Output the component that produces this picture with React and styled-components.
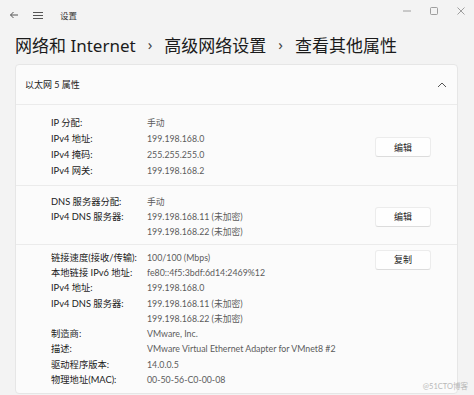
import React from "react";
import styled, { createGlobalStyle } from "styled-components";

const Global = createGlobalStyle`
  html, body { margin: 0; padding: 0; background: #f3f3f3; }
  body {
    font-family: Lato, "Noto Sans CJK SC", sans-serif;
    color: #1b1b1b;
  }
`;

const Page = styled.div`
  width: 474px;
  height: 395px;
  overflow: hidden;
  position: relative;
  background: #f3f3f3;
`;

const TopBar = styled.div`
  height: 30px;
  display: flex;
  align-items: center;
  padding: 0 0 0 8px;
`;

const IconBtn = styled.div`
  width: ${(p) => p.w || 26}px;
  display: flex;
  align-items: center;
  justify-content: center;
  color: #555;
`;

const AppName = styled.span`
  font-size: 8.5px;
  color: #333;
  margin-left: 4px;
`;

const WinControls = styled.div`
  margin-left: auto;
  display: flex;
  align-items: center;
  align-self: flex-start;
  height: 22px;
`;

const WinBtn = styled.div`
  width: 27px;
  display: flex;
  justify-content: center;
  color: #777;
`;

const Title = styled.h1`
  margin: 0;
  padding: 0 0 6px 15px;
  box-sizing: border-box;
  font-family: "Noto Sans", "Noto Sans CJK SC", sans-serif;
  font-size: 17px;
  font-weight: 400;
  height: 34px;
  display: flex;
  align-items: center;
  gap: 10px;
  color: #1b1b1b;
`;

const Sep = styled.span`
  font-size: 15px;
  color: #444;
  margin: 0 2px;
`;

const Card = styled.div`
  margin: 0 16px 0 15px;
  background: #fbfbfb;
  border: 1px solid #e6e6e6;
  border-radius: 4px;
`;

const CardHeader = styled.div`
  height: 40px;
  box-sizing: border-box;
  display: flex;
  align-items: center;
  padding: 0 10px 0 9px;
  font-size: 9px;
  color: #1b1b1b;
  border-bottom: 1px solid #ebebeb;
`;

const Chevron = styled.div`
  margin-left: auto;
  display: flex;
  color: #555;
`;

const Section = styled.div`
  display: flex;
  align-items: ${(p) => (p.top ? "flex-start" : "center")};
  padding: ${(p) => p.pad};
  border-bottom: ${(p) => (p.last ? "none" : "1px solid #ebebeb")};
`;

const Rows = styled.div`
  flex: 1;
  display: grid;
  grid-template-columns: 96px 1fr;
  align-items: baseline;
  padding-left: 35px;
  font-size: 9.3px;
  line-height: ${(p) => p.lh}px;
`;

const Label = styled.div`
  color: #1b1b1b;
  white-space: nowrap;
`;

const Value = styled.div`
  color: #5c5c5c;
  font-size: 8.8px;
  white-space: nowrap;
`;

const Button = styled.div`
  width: 54px;
  height: 18px;
  margin-right: 26px;
  background: #fefefe;
  border: 1px solid #ececec;
  border-bottom-color: #dcdcdc;
  border-radius: 3px;
  display: flex;
  align-items: center;
  justify-content: center;
  font-size: 9px;
  color: #1b1b1b;
`;

const Watermark = styled.div`
  position: absolute;
  right: 6px;
  bottom: 4px;
  font-size: 7.5px;
  color: #b8b8b8;
`;

const rowsFor = (items) =>
  items.map(([l, v], i) => (
    <React.Fragment key={i}>
      <Label>{l}</Label>
      <Value>{v}</Value>
    </React.Fragment>
  ));

export default function App() {
  return (
    <Page>
      <Global />
      <TopBar>
        <IconBtn w={12}>
          <svg width="10" height="10" viewBox="0 0 10 10" fill="none" stroke="#555" strokeWidth="1">
            <path d="M9 5H1.5M4.5 2 1.5 5l3 3" />
          </svg>
        </IconBtn>
        <IconBtn w={36}>
          <svg width="10" height="9" viewBox="0 0 10 9" fill="none" stroke="#555" strokeWidth="1">
            <path d="M0 1.5h10M0 4.5h10M0 7.5h10" />
          </svg>
        </IconBtn>
        <AppName>设置</AppName>
        <WinControls>
          <WinBtn>
            <svg width="8" height="8" viewBox="0 0 8 8" stroke="#888" strokeWidth="0.8">
              <path d="M0 4h8" />
            </svg>
          </WinBtn>
          <WinBtn>
            <svg width="8" height="8" viewBox="0 0 8 8" fill="none" stroke="#888" strokeWidth="0.8">
              <rect x="0.5" y="0.5" width="7" height="7" rx="1" />
            </svg>
          </WinBtn>
          <WinBtn>
            <svg width="8" height="8" viewBox="0 0 8 8" stroke="#888" strokeWidth="0.8">
              <path d="M0.5 0.5l7 7M7.5 0.5l-7 7" />
            </svg>
          </WinBtn>
        </WinControls>
      </TopBar>
      <Title>
        网络和 Internet <Sep>›</Sep> 高级网络设置 <Sep>›</Sep> 查看其他属性
      </Title>
      <Card>
        <CardHeader>
          以太网 5 属性
          <Chevron>
            <svg width="10" height="6" viewBox="0 0 10 6" fill="none" stroke="#555" strokeWidth="1">
              <path d="M1 5l4-4 4 4" />
            </svg>
          </Chevron>
        </CardHeader>
        <Section pad="10px 0 6px">
          <Rows lh={16}>
            {rowsFor([
              ["IP 分配:", "手动"],
              ["IPv4 地址:", "199.198.168.0"],
              ["IPv4 掩码:", "255.255.255.0"],
              ["IPv4 网关:", "199.198.168.2"],
            ])}
          </Rows>
          <Button>编辑</Button>
        </Section>
        <Section pad="8px 0 4px">
          <Rows lh={15.2}>
            {rowsFor([
              ["DNS 服务器分配:", "手动"],
              ["IPv4 DNS 服务器:", "199.198.168.11 (未加密)"],
              ["", "199.198.168.22 (未加密)"],
            ])}
          </Rows>
          <Button>编辑</Button>
        </Section>
        <Section pad="5px 0 6px" top last>
          <Rows lh={15.3}>
            {rowsFor([
              ["链接速度(接收/传输):", "100/100 (Mbps)"],
              ["本地链接 IPv6 地址:", "fe80::4f5:3bdf:6d14:2469%12"],
              ["IPv4 地址:", "199.198.168.0"],
              ["IPv4 DNS 服务器:", "199.198.168.11 (未加密)"],
              ["", "199.198.168.22 (未加密)"],
              ["制造商:", "VMware, Inc."],
              ["描述:", "VMware Virtual Ethernet Adapter for VMnet8 #2"],
              ["驱动程序版本:", "14.0.0.5"],
              ["物理地址(MAC):", "00-50-56-C0-00-08"],
            ])}
          </Rows>
          <Button>复制</Button>
        </Section>
      </Card>
      <Watermark>@51CTO博客</Watermark>
    </Page>
  );
}
